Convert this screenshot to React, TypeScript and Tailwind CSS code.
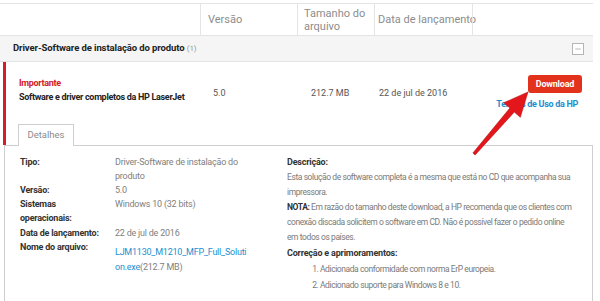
import React from 'react';
import { Minus } from 'lucide-react';

const line = 'border-[#e4e4e4]';

const Arrow: React.FC = () => (
    <svg className="absolute left-0 top-0 pointer-events-none" width="600" height="301" viewBox="0 0 600 301">
        <polygon
            points="528,92 520.3,117.3 514.3,112 475.1,155 472.9,153 509.9,108 503.9,102.7"
            fill="#e3161b"
            stroke="#b50e13"
            strokeWidth="0.6"
            strokeLinejoin="round"
        />
    </svg>
);

export default function App() {
    return (
        <div className="relative w-[600px] h-[301px] overflow-hidden bg-white text-[#808080] font-['Roboto',sans-serif]">
            <div className="w-[593px] pt-[3px]">
                {/* column headers */}
                <div className={`grid grid-cols-[200px_97px_77px_98px_121px] h-[33px] border-y ${line} text-[11px] leading-[13px] text-[#8c8c8c]`}>
                    <div />
                    <div className={`border-l ${line} flex items-center pl-[7px]`}>Versão</div>
                    <div className={`border-l ${line} flex items-center pl-[6px]`}>
                        Tamanho do
                        <br />
                        arquivo
                    </div>
                    <div className={`border-l ${line} flex items-center pl-[3px] whitespace-nowrap`}>Data de lançamento</div>
                    <div className={`border-l ${line}`} />
                </div>

                {/* group row */}
                <div className={`h-[26px] bg-[#f5f5f5] border-b ${line} flex items-center justify-between pl-[13px] pr-[9px]`}>
                    <div className="text-[9.5px] tracking-[-0.1px] font-bold text-[#222]">
                        Driver-Software de instalação do produto{' '}
                        <span className="text-[8px] font-normal text-[#999]">(1)</span>
                    </div>
                    <div className="w-[12px] h-[12px] border border-[#b5b5b5] bg-white flex items-center justify-center">
                        <Minus className="w-[8px] h-[8px] text-[#999]" strokeWidth={2} />
                    </div>
                </div>

                {/* item */}
                <div className="ml-[3px] border-l-[3px] border-[#d32027]">
                    <div className="grid grid-cols-[194px_97px_77px_98px_121px] h-[62px] text-[9px] leading-[14px] text-[#555]">
                        <div className="pl-[13px] pt-[14px] tracking-[-0.3px]">
                            <div className="font-bold text-[#d32027]">Importante</div>
                            <div className="font-bold text-[#222] leading-[15px]">Software e driver completos da HP LaserJet</div>
                        </div>
                        <div className="pl-[13px] pt-[24px]">5.0</div>
                        <div className="pl-[14px] pt-[24px]">212.7 MB</div>
                        <div className="pl-[5px] pt-[24px]">22 de jul de 2016</div>
                        <div className="flex flex-col items-end pr-[11px] pt-[13px]">
                            <button className="w-[54px] h-[18px] rounded-[3px] bg-[#e2321c] text-white text-[9px] font-bold tracking-[-0.2px]">
                                Download
                            </button>
                            <a className="mt-[4px] mr-[4px] text-[#1a8fd0] font-bold tracking-[-0.3px]">Termos de Uso da HP</a>
                        </div>
                    </div>
                    <div className="h-[21px] flex items-end pl-[12px]">
                        <div className="relative z-10 -mb-px w-[56px] h-[22px] border border-b-0 border-[#cfcfcf] bg-white flex items-center justify-center text-[9.5px] text-[#8c8c8c]">
                            Detalhes
                        </div>
                    </div>
                </div>

                {/* details panel */}
                <div className="ml-[4px] w-[589px] h-[200px] border border-[#cfcfcf] pt-[9px] pl-[15px] text-[9px]">
                    <div className="flex">
                        <div className="w-[267px] shrink-0 grid grid-cols-[95px_132px] leading-[14px] content-start tracking-[-0.22px]">
                            <div className="font-bold text-[#333]">Tipo:</div>
                            <div>Driver-Software de instalação do produto</div>
                            <div className="font-bold text-[#333]">Versão:</div>
                            <div>5.0</div>
                            <div className="font-bold text-[#333]">
                                Sistemas
                                <br />
                                operacionais:
                            </div>
                            <div>Windows 10 (32 bits)</div>
                            <div className="font-bold text-[#333] pt-px">Data de lançamento:</div>
                            <div className="pt-px">22 de jul de 2016</div>
                            <div className="font-bold text-[#333]">Nome do arquivo:</div>
                            <div className="mt-[5px] leading-[15px] break-all">
                                <a className="text-[#1a8fd0]">LJM1130_M1210_MFP_Full_Solution.exe</a>
                                (212.7 MB)
                            </div>
                        </div>
                        <div className="w-[304px] shrink-0 leading-[15px] text-[8.5px] tracking-[-0.42px] text-[#7a7a7a]">
                            <div className="font-bold text-[9px] tracking-[-0.2px] text-[#333]">Descrição:</div>
                            <p>Esta solução de software completa é a mesma que está no CD que acompanha sua impressora.</p>
                            <p>
                                <span className="font-bold text-[#333]">NOTA:</span> Em razão do tamanho deste download, a HP
                                recomenda que os clientes com
                                <br />
                                conexão discada solicitem o software em CD. Não é possível fazer o pedido online
                                <br />
                                em todos os países.
                            </p>
                            <div className="font-bold text-[9px] tracking-[-0.2px] text-[#333] mt-[1px]">Correção e aprimoramentos:</div>
                            <ol className="list-decimal pl-[33px] leading-[16px]">
                                <li>Adicionada conformidade com norma ErP europeia.</li>
                                <li>Adicionado suporte para Windows 8 e 10.</li>
                            </ol>
                        </div>
                    </div>
                    <div className={`mt-[8px] mr-[12px] border-t ${line}`} />
                </div>
            </div>
            <Arrow />
        </div>
    );
}
